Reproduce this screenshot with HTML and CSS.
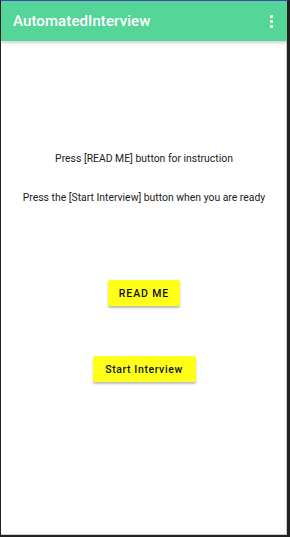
FILE: index.html
```html
<!DOCTYPE html>
<html lang="en">
<head>
<meta charset="UTF-8" />
<meta name="viewport" content="width=device-width, initial-scale=1" />
<title>AutomatedInterview</title>
<link rel="stylesheet" href="styles.css">
</head>
<body>

<div class="phone">
  <header class="app-bar">
    <span class="app-title">AutomatedInterview</span>
    <span class="menu-dots" aria-label="More options">
      <i></i><i></i><i></i>
    </span>
  </header>

  <main class="content">
    <p class="hint first">Press [READ ME] button for instruction</p>
    <p class="hint">Press the [Start Interview] button when you are ready</p>

    <button class="btn readme">READ ME</button>
    <button class="btn start">Start Interview</button>
  </main>
</div>

</body>
</html>
```

FILE: styles.css
```css
* {
  margin: 0; padding: 0; box-sizing: border-box;
}
html, body {
  width: 290px;
  height: 537px;
  overflow: hidden;
  background: #1a1a1a;
  font-family: Roboto, 'Noto Sans', sans-serif;
}
.phone {
  width: 290px;
  height: 537px;
  border-top: 1px solid #4b3fc4;
  border-left: 1px solid #222;
  border-right: 3px solid #222;
  border-bottom: 2px solid #222;
  background: #fff;
  display: flex;
  flex-direction: column;
  box-shadow: inset -1px -1px 0 #cfcfcf;
}
.app-bar {
  height: 40px;
  flex-shrink: 0;
  background: #55d598;
  color: #fff;
  display: flex;
  align-items: center;
  justify-content: space-between;
  padding: 0 14px 0 12px;
  box-shadow: 0 2px 3px rgba(0,0,0,0.18);
  position: relative;
  z-index: 1;
}
.app-title {
  font-size: 15px;
  font-weight: 500;
  letter-spacing: 0.1px;
}
.menu-dots {
  display: flex;
  flex-direction: column;
  gap: 2px;
}
.menu-dots i {
  width: 3px;
  height: 3px;
  background: #fff;
  border-radius: 1px;
}
.content {
  flex: 1;
  display: flex;
  flex-direction: column;
  align-items: center;
  padding-top: 111px;
}
.hint {
  font-size: 10.4px;
  color: #1c1c1c;
  line-height: 13px;
}
.hint.first {
  margin-bottom: 26px;
}
.btn {
  height: 26px;
  border: none;
  border-radius: 2px;
  background: #ffff1a;
  color: #111;
  font-family: Roboto, sans-serif;
  font-size: 10.5px;
  font-weight: 500;
  letter-spacing: 0.9px;
  box-shadow: 0 2px 2px rgba(0,0,0,0.25);
}
.btn.readme {
  width: 72px;
  margin-top: 76px;
}
.btn.start {
  width: 103px;
  margin-top: 50px;
  letter-spacing: 0.6px;
}
```
